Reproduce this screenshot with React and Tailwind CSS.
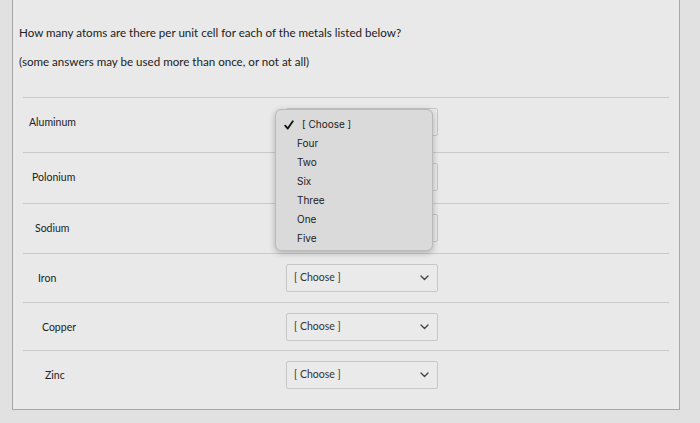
import React from "react";

const metals = [
  { name: "Aluminum", h: "h-[55px]", pl: "pl-[6px]", covered: true },
  { name: "Polonium", h: "h-[51px]", pl: "pl-[9px]", covered: true },
  { name: "Sodium", h: "h-[50px]", pl: "pl-[12px]", covered: true },
  { name: "Iron", h: "h-[49px]", pl: "pl-[15px]" },
  { name: "Copper", h: "h-[48px]", pl: "pl-[19px]" },
  { name: "Zinc", h: "h-[48px]", pl: "pl-[22px]" },
];

const options = ["Four", "Two", "Six", "Three", "One", "Five"];

function Chevron() {
  return (
    <svg width="9" height="6" viewBox="0 0 9 6" fill="none">
      <path d="M1 1l3.5 3.5L8 1" stroke="#444" strokeWidth="1.4" strokeLinecap="round" strokeLinejoin="round" />
    </svg>
  );
}

function Check() {
  return (
    <svg width="10" height="10" viewBox="0 0 10 10" fill="none">
      <path d="M1.2 5.6L3.8 8.6L8.8 1.2" stroke="#111" strokeWidth="1.8" strokeLinecap="round" strokeLinejoin="round" />
    </svg>
  );
}

// the ones sitting under the open menu don't show their label
function Select({ covered }) {
  return (
    <div className="w-[152px] h-[28px] flex items-center justify-between pl-[7px] pr-[8px] bg-[#e9eae9] border border-[#c6c7c6] rounded-[2px]">
      <span className={`text-[10.5px] text-[#333] ${covered ? "invisible" : ""}`}>[ Choose ]</span>
      <Chevron />
    </div>
  );
}

export default function App() {
  return (
    <div className="w-[700px] h-[423px] bg-[#e0e1e0] overflow-hidden" style={{ fontFamily: "Lato, 'Liberation Sans', sans-serif" }}>
      <div className="ml-[12px] mr-[20px] h-[410px] bg-[#e8e9e8] border-l border-r border-b border-[#a5a6a5]">
        <div className="pl-[6px] pt-[24px] text-[11.6px] text-[#222]">
          <p className="leading-[18px]">How many atoms are there per unit cell for each of the metals listed below?</p>
          <p className="leading-[18px] mt-[11px]">(some answers may be used more than once, or not at all)</p>
        </div>

        <div className="relative mt-[26px] mx-[10px] border-t border-[#c9cac9]">
          {metals.map((m, i) => (
            <div
              key={m.name}
              className={`${m.h} flex ${i < metals.length - 1 ? "border-b border-[#c9cac9]" : ""}`}
            >
              <div className={`w-[263px] pt-[17px] ${m.pl} text-[10.5px] text-[#222]`}>{m.name}</div>
              <div className="pt-[10px]">
                <Select covered={m.covered} />
              </div>
            </div>
          ))}

          <div className="absolute left-[252px] top-[11px] w-[158px] h-[142px] rounded-[6px] bg-[#d9dad9] border border-[#b9bab9] shadow-[0_2px_6px_rgba(0,0,0,0.25)] pt-[5px]" style={{ fontFamily: "Inter, 'Liberation Sans', sans-serif" }}>
            <div className="flex items-center h-[19px] pl-[8px] text-[10px] text-[#222]">
              <span className="w-[18px] flex items-center"><Check /></span>
              <span>[ Choose ]</span>
            </div>
            {options.map((o) => (
              <div key={o} className="h-[19px] flex items-center pl-[21px] text-[10px] text-[#222]">
                {o}
              </div>
            ))}
          </div>
        </div>
      </div>
    </div>
  );
}
